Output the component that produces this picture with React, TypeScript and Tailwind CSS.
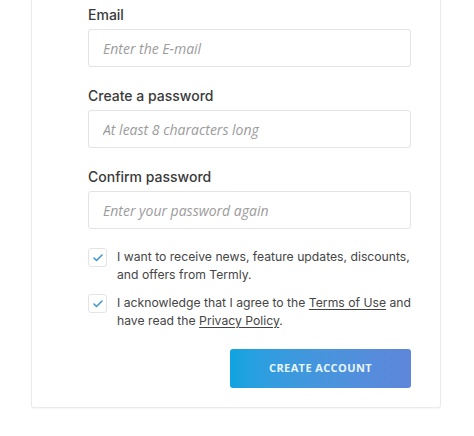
import { Check } from "lucide-react"

const labelFont = { fontFamily: "Inter, 'Open Sans', sans-serif" }

function Field({ label, placeholder, type }: { label: string; placeholder: string; type: string }) {
  return (
    <div className="flex flex-col">
      <label className="h-[21px] text-[14px] font-medium leading-[21px] text-[#3a3a3a] font-['Inter',sans-serif]">
        {label}
      </label>
      <input
        type={type}
        placeholder={placeholder}
        className="mt-[4px] h-[38px] w-full rounded-[3px] border border-[#e3e3e3] bg-white px-[14px] text-[14px] italic text-[#333] placeholder:text-[#9c9c9c] font-['Open_Sans',sans-serif] outline-none"
      />
    </div>
  )
}

function Box() {
  return (
    <span className="flex h-[19px] w-[19px] shrink-0 items-center justify-center rounded-[3px] border border-[#e4e4e4] bg-white">
      <Check className="h-[12px] w-[12px] text-[#3a94d6]" strokeWidth={3} />
    </span>
  )
}

export default function App() {
  return (
    <div className="h-[436px] w-[474px] overflow-hidden bg-white">
      <div className="ml-[31px] w-[410px] rounded-b-[3px] border border-t-0 border-[#ebebeb] bg-white pt-[4px] pb-[19px] pl-[56px] pr-[29px] shadow-[0_1px_2px_rgba(0,0,0,0.04)]">
        <div className="flex flex-col gap-[18px]">
          <Field label="Email" placeholder="Enter the E-mail" type="email" />
          <Field label="Create a password" placeholder="At least 8 characters long" type="password" />
          <Field label="Confirm password" placeholder="Enter your password again" type="password" />
        </div>

        <div className="mt-[19px] flex flex-col gap-[10px] text-[12.2px] leading-[18px] text-[#454545]" style={labelFont}>
          <div className="flex gap-[10px]">
            <Box />
            <p className="whitespace-nowrap">
              I want to receive news, feature updates, discounts,
              <br />
              and offers from Termly.
            </p>
          </div>
          <div className="flex gap-[10px]">
            <Box />
            <p className="whitespace-nowrap">
              I acknowledge that I agree to the{" "}
              <a href="#" className="underline underline-offset-2">Terms of Use</a> and
              <br />
              have read the <a href="#" className="underline underline-offset-2">Privacy Policy</a>.
            </p>
          </div>
        </div>

        <div className="mt-[19px] flex justify-end">
          <button className="h-[39px] w-[181px] rounded-[3px] bg-gradient-to-r from-[#0ea3e0] to-[#5e86da] text-[11px] font-bold tracking-[0.4px] text-[#e8f6ff] font-['Open_Sans',sans-serif]">
            CREATE ACCOUNT
          </button>
        </div>
      </div>
    </div>
  )
}
